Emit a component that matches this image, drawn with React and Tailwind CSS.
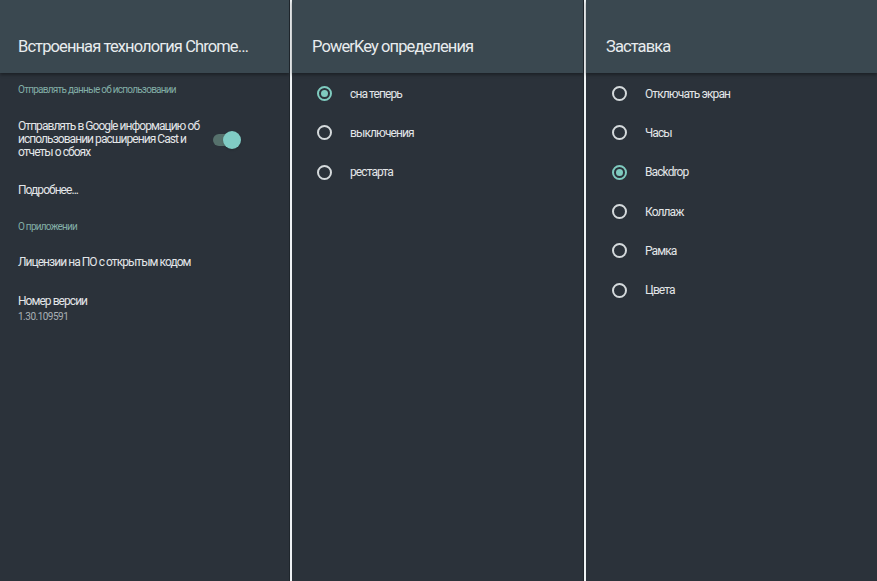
import React from 'react';

const font = { fontFamily: 'Roboto, "Noto Sans", sans-serif' };

const Radio = ({ checked }) => (
  <span
    className={`flex h-[15px] w-[15px] shrink-0 items-center justify-center rounded-full border-2 ${
      checked ? 'border-[#7fcbbf]' : 'border-[#d5dadc]'
    }`}
  >
    {checked && <span className="h-[7px] w-[7px] rounded-full bg-[#7fcbbf]" />}
  </span>
);

const Header = ({ title, pad }) => (
  <div
    className={`flex h-[73px] shrink-0 items-end bg-[#3a4850] pb-[16px] shadow-[0_2px_3px_rgba(0,0,0,0.35)] ${pad}`}
  >
    <h1 className="whitespace-nowrap text-[16.5px] leading-[20px] tracking-[-0.9px] text-[#e8ecee]">{title}</h1>
  </div>
);

const RadioPanel = ({ title, items, selected, pad, indent }) => (
  <div className="flex min-w-0 flex-1 flex-col">
    <Header title={title} pad={pad} />
    <div className="flex flex-col pt-[1px]">
      {items.map((item) => (
        <div key={item} className={`flex h-[39.3px] items-center gap-[18px] ${indent}`}>
          <Radio checked={item === selected} />
          <span className="text-[12px] tracking-[-0.9px] text-[#e3e6e8]">{item}</span>
        </div>
      ))}
    </div>
  </div>
);

const Divider = () => (
  <div className="w-[3px] shrink-0 bg-[#1f262c] pl-[1px]">
    <div className="h-full w-[2px] bg-[#eef2f4]" />
  </div>
);

const text = 'whitespace-nowrap text-[12px] tracking-[-0.95px] text-[#e3e6e8]';
const caption = 'whitespace-nowrap text-[10px] leading-[12px] tracking-[-0.75px] text-[#82aea6]';

export default function App() {
  return (
    <div className="flex h-[581px] w-[877px] overflow-hidden bg-[#2b323a]" style={font}>
      {/* Cast panel */}
      <div className="flex w-[289px] shrink-0 flex-col">
        <Header title="Встроенная технология Chrome…" pad="pl-[18px]" />
        <div className="flex flex-col pl-[18px] pr-[20px]">
          <p className={`mt-[11px] ${caption}`}>Отправлять данные об использовании</p>
          <div className="mt-[24px] flex items-center justify-between">
            <p className={`${text} leading-[13px]`}>
              Отправлять в Google информацию об
              <br />
              использовании расширения Cast и
              <br />
              отчеты о сбоях
            </p>
            <div className="relative mr-[34px] h-[12px] w-[22px] rounded-full bg-[#56716c]">
              <span className="absolute -right-[6px] -top-[3px] h-[18px] w-[18px] rounded-full bg-[#80cbc4] shadow" />
            </div>
          </div>
          <p className={`mt-[24px] leading-[14px] ${text}`}>Подробнее...</p>
          <p className={`mt-[24px] ${caption}`}>О приложении</p>
          <p className={`mt-[22px] leading-[14px] ${text}`}>Лицензии на ПО с открытым кодом</p>
          <p className={`mt-[25px] leading-[14px] ${text}`}>Номер версии</p>
          <p className="mt-[3px] text-[10px] leading-[12px] tracking-[-0.5px] text-[#a9b0b5]">1.30.109591</p>
        </div>
      </div>
      <Divider />
      <RadioPanel
        title="PowerKey определения"
        items={['сна теперь', 'выключения', 'рестарта']}
        selected="сна теперь"
        pad="pl-[20px]"
        indent="pl-[25px]"
      />
      <Divider />
      <RadioPanel
        title="Заставка"
        items={['Отключать экран', 'Часы', 'Backdrop', 'Коллаж', 'Рамка', 'Цвета']}
        selected="Backdrop"
        pad="pl-[20px]"
        indent="pl-[26px]"
      />
    </div>
  );
}
